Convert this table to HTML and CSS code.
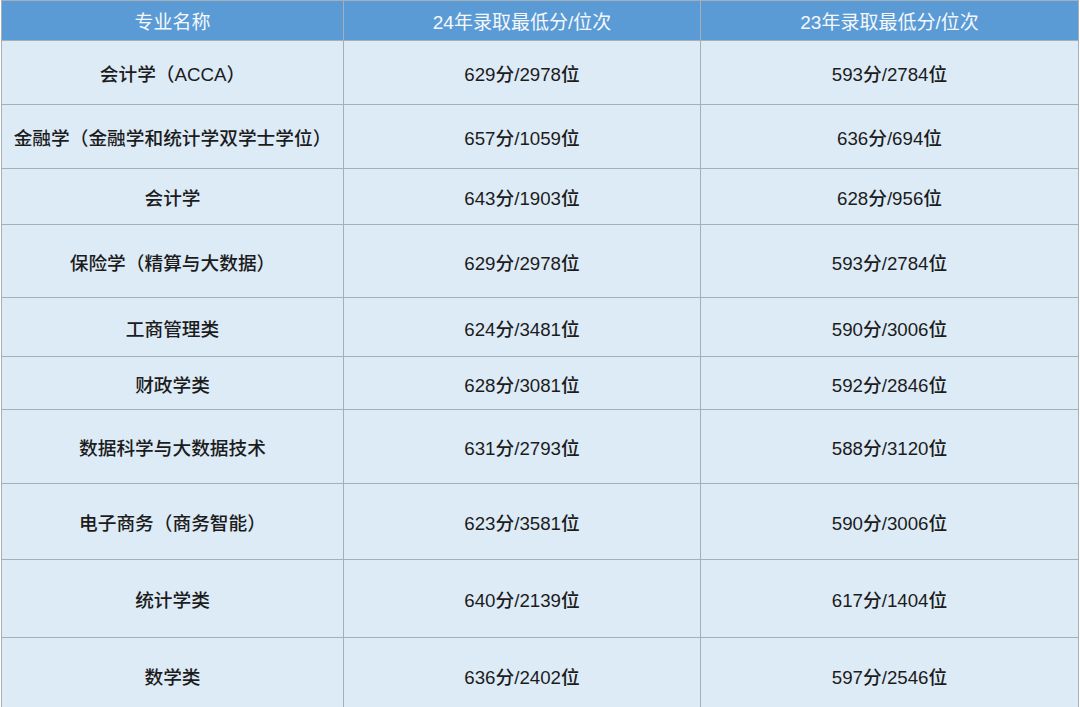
FILE: index.html
```html
<!DOCTYPE html>
<html lang="zh">
<head>
<meta charset="utf-8">
<link rel="stylesheet" href="styles.css">
</head>
<body>
<table class="score-table">
  <thead>
    <tr><th>专业名称</th><th>24年录取最低分/位次</th><th>23年录取最低分/位次</th></tr>
  </thead>
  <tbody>
    <tr><td>会计学（ACCA）</td><td>629分/2978位</td><td>593分/2784位</td></tr>
    <tr><td>金融学（金融学和统计学双学士学位）</td><td>657分/1059位</td><td>636分/694位</td></tr>
    <tr><td>会计学</td><td>643分/1903位</td><td>628分/956位</td></tr>
    <tr><td>保险学（精算与大数据）</td><td>629分/2978位</td><td>593分/2784位</td></tr>
    <tr><td>工商管理类</td><td>624分/3481位</td><td>590分/3006位</td></tr>
    <tr><td>财政学类</td><td>628分/3081位</td><td>592分/2846位</td></tr>
    <tr><td>数据科学与大数据技术</td><td>631分/2793位</td><td>588分/3120位</td></tr>
    <tr><td>电子商务（商务智能）</td><td>623分/3581位</td><td>590分/3006位</td></tr>
    <tr><td>统计学类</td><td>640分/2139位</td><td>617分/1404位</td></tr>
    <tr><td>数学类</td><td>636分/2402位</td><td>597分/2546位</td></tr>
  </tbody>
</table>
</body>
</html>
```
FILE: styles.css
```css
html, body {
  margin: 0;
  padding: 0;
  background: #ffffff;
}
body {
  padding-left: 1px;
  font-family: "Liberation Sans", "Noto Sans CJK SC", sans-serif;
}
.score-table {
  border-collapse: collapse;
  table-layout: fixed;
  width: 1078px;
}
.score-table th,
.score-table td {
  border: 1px solid #a6aeb6;
  text-align: center;
  vertical-align: middle;
  padding: 0;
}
.score-table th {
  background: #5b9bd5;
  color: #f4f8fc;
  font-weight: normal;
  font-size: 19px;
  height: 39px;
}
.score-table td {
  background: #ddebf7;
  color: #1c1c1c;
  font-size: 18.7px;
  font-weight: 500;
}
.score-table th:nth-child(1) { width: 341px; }
.score-table th:nth-child(2) { width: 356px; }
.score-table tbody tr:nth-child(1) { height: 64px; }
.score-table tbody tr:nth-child(2) { height: 64px; }
.score-table tbody tr:nth-child(3) { height: 56px; }
.score-table tbody tr:nth-child(4) { height: 73px; }
.score-table tbody tr:nth-child(5) { height: 59px; }
.score-table tbody tr:nth-child(6) { height: 53px; }
.score-table tbody tr:nth-child(7) { height: 74px; }
.score-table tbody tr:nth-child(8) { height: 76px; }
.score-table tbody tr:nth-child(9) { height: 78px; }
.score-table tbody tr:nth-child(10) { height: 76px; }
```
